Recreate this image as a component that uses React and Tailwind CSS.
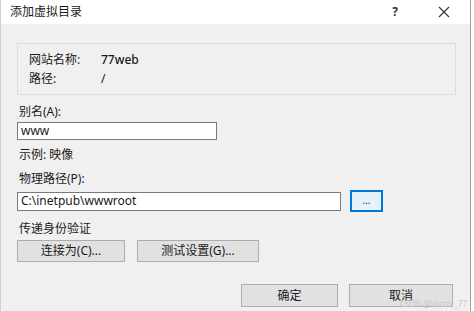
import React from "react";

const font = { fontFamily: '"Noto Sans", "Noto Sans CJK SC", sans-serif' };

function Btn({ children, className = "" }) {
  return (
    <div
      className={
        "flex items-center justify-center bg-[#e1e1e1] border border-[#adadad] text-[12px] text-[#1a1a1a] " +
        className
      }
    >
      {children}
    </div>
  );
}

export default function App() {
  return (
    <div
      className="w-[474px] h-[311px] bg-white flex overflow-hidden relative"
      style={font}
    >
      <div className="w-[471px] h-full flex flex-col border-r border-[#a0a0a0] border-l border-l-[#d0d0d0]">
        {/* title bar */}
        <div className="h-[24px] bg-white flex items-center pl-[9px] shrink-0">
          <span className="text-[12px] text-[#1a1a1a] leading-none">添加虚拟目录</span>
          <span className="ml-auto mr-[40px] text-[12px] font-bold text-[#333] leading-none">?</span>
          <svg width="12" height="12" viewBox="0 0 12 12" className="mr-[20px]">
            <path d="M1 1 L11 11 M11 1 L1 11" stroke="#333" strokeWidth="1.1" />
          </svg>
        </div>
        {/* body */}
        <div className="flex-1 bg-[#f0f0f0] flex flex-col px-[16px] pt-[19px]">
          <div className="h-[52px] w-[439px] border border-[#dcdcdc] flex flex-col justify-center gap-[3px] pl-[11px] text-[12px] text-[#1a1a1a]">
            <div className="flex h-[16px] items-center">
              <span className="w-[72px]">网站名称:</span>
              <span className="font-medium">77web</span>
            </div>
            <div className="flex h-[16px] items-center">
              <span className="w-[72px]">路径:</span>
              <span>/</span>
            </div>
          </div>

          <div className="mt-[9px] pl-[2px] text-[12px] text-[#1a1a1a] h-[16px] leading-[16px]">别名(A):</div>
          <div className="mt-[2px] w-[200px] h-[18px] bg-white border border-[#7a7a7a] flex items-center pl-[3px] text-[12px] text-[#1a1a1a]">
            www
          </div>

          <div className="mt-[7px] pl-[2px] text-[12px] text-[#1a1a1a] h-[16px] leading-[16px]">示例: 映像</div>

          <div className="mt-[8px] pl-[2px] text-[12px] text-[#1a1a1a] h-[16px] leading-[16px]">物理路径(P):</div>
          <div className="mt-[3px] flex items-center">
            <div className="w-[324px] h-[19px] bg-white border border-[#7a7a7a] flex items-center pl-[3px] text-[12px] text-[#1a1a1a]">
              C:\inetpub\wwwroot
            </div>
            <div className="ml-[9px] w-[33px] h-[22px] bg-[#e5f1fb] border-2 border-[#0078d7] flex items-center justify-center text-[10px] text-[#333] leading-none pb-[2px]">
              ...
            </div>
          </div>

          <div className="mt-[9px] pl-[2px] text-[12px] text-[#1a1a1a] h-[16px] leading-[16px]">传递身份验证</div>
          <div className="mt-[3px] flex">
            <Btn className="w-[108px] h-[22px]">连接为(C)...</Btn>
            <Btn className="ml-[12px] w-[122px] h-[22px]">测试设置(G)...</Btn>
          </div>

          <div className="mt-[22px] flex justify-end pr-[1px]">
            <Btn className="w-[97px] h-[23px]">确定</Btn>
            <Btn className="ml-[11px] w-[104px] h-[23px]">取消</Btn>
          </div>
        </div>
      </div>
      <div className="absolute right-[7px] bottom-[3px] text-[8px] text-[#c8c8c8] leading-none">
        CSDN @Vector_77
      </div>
    </div>
  );
}
